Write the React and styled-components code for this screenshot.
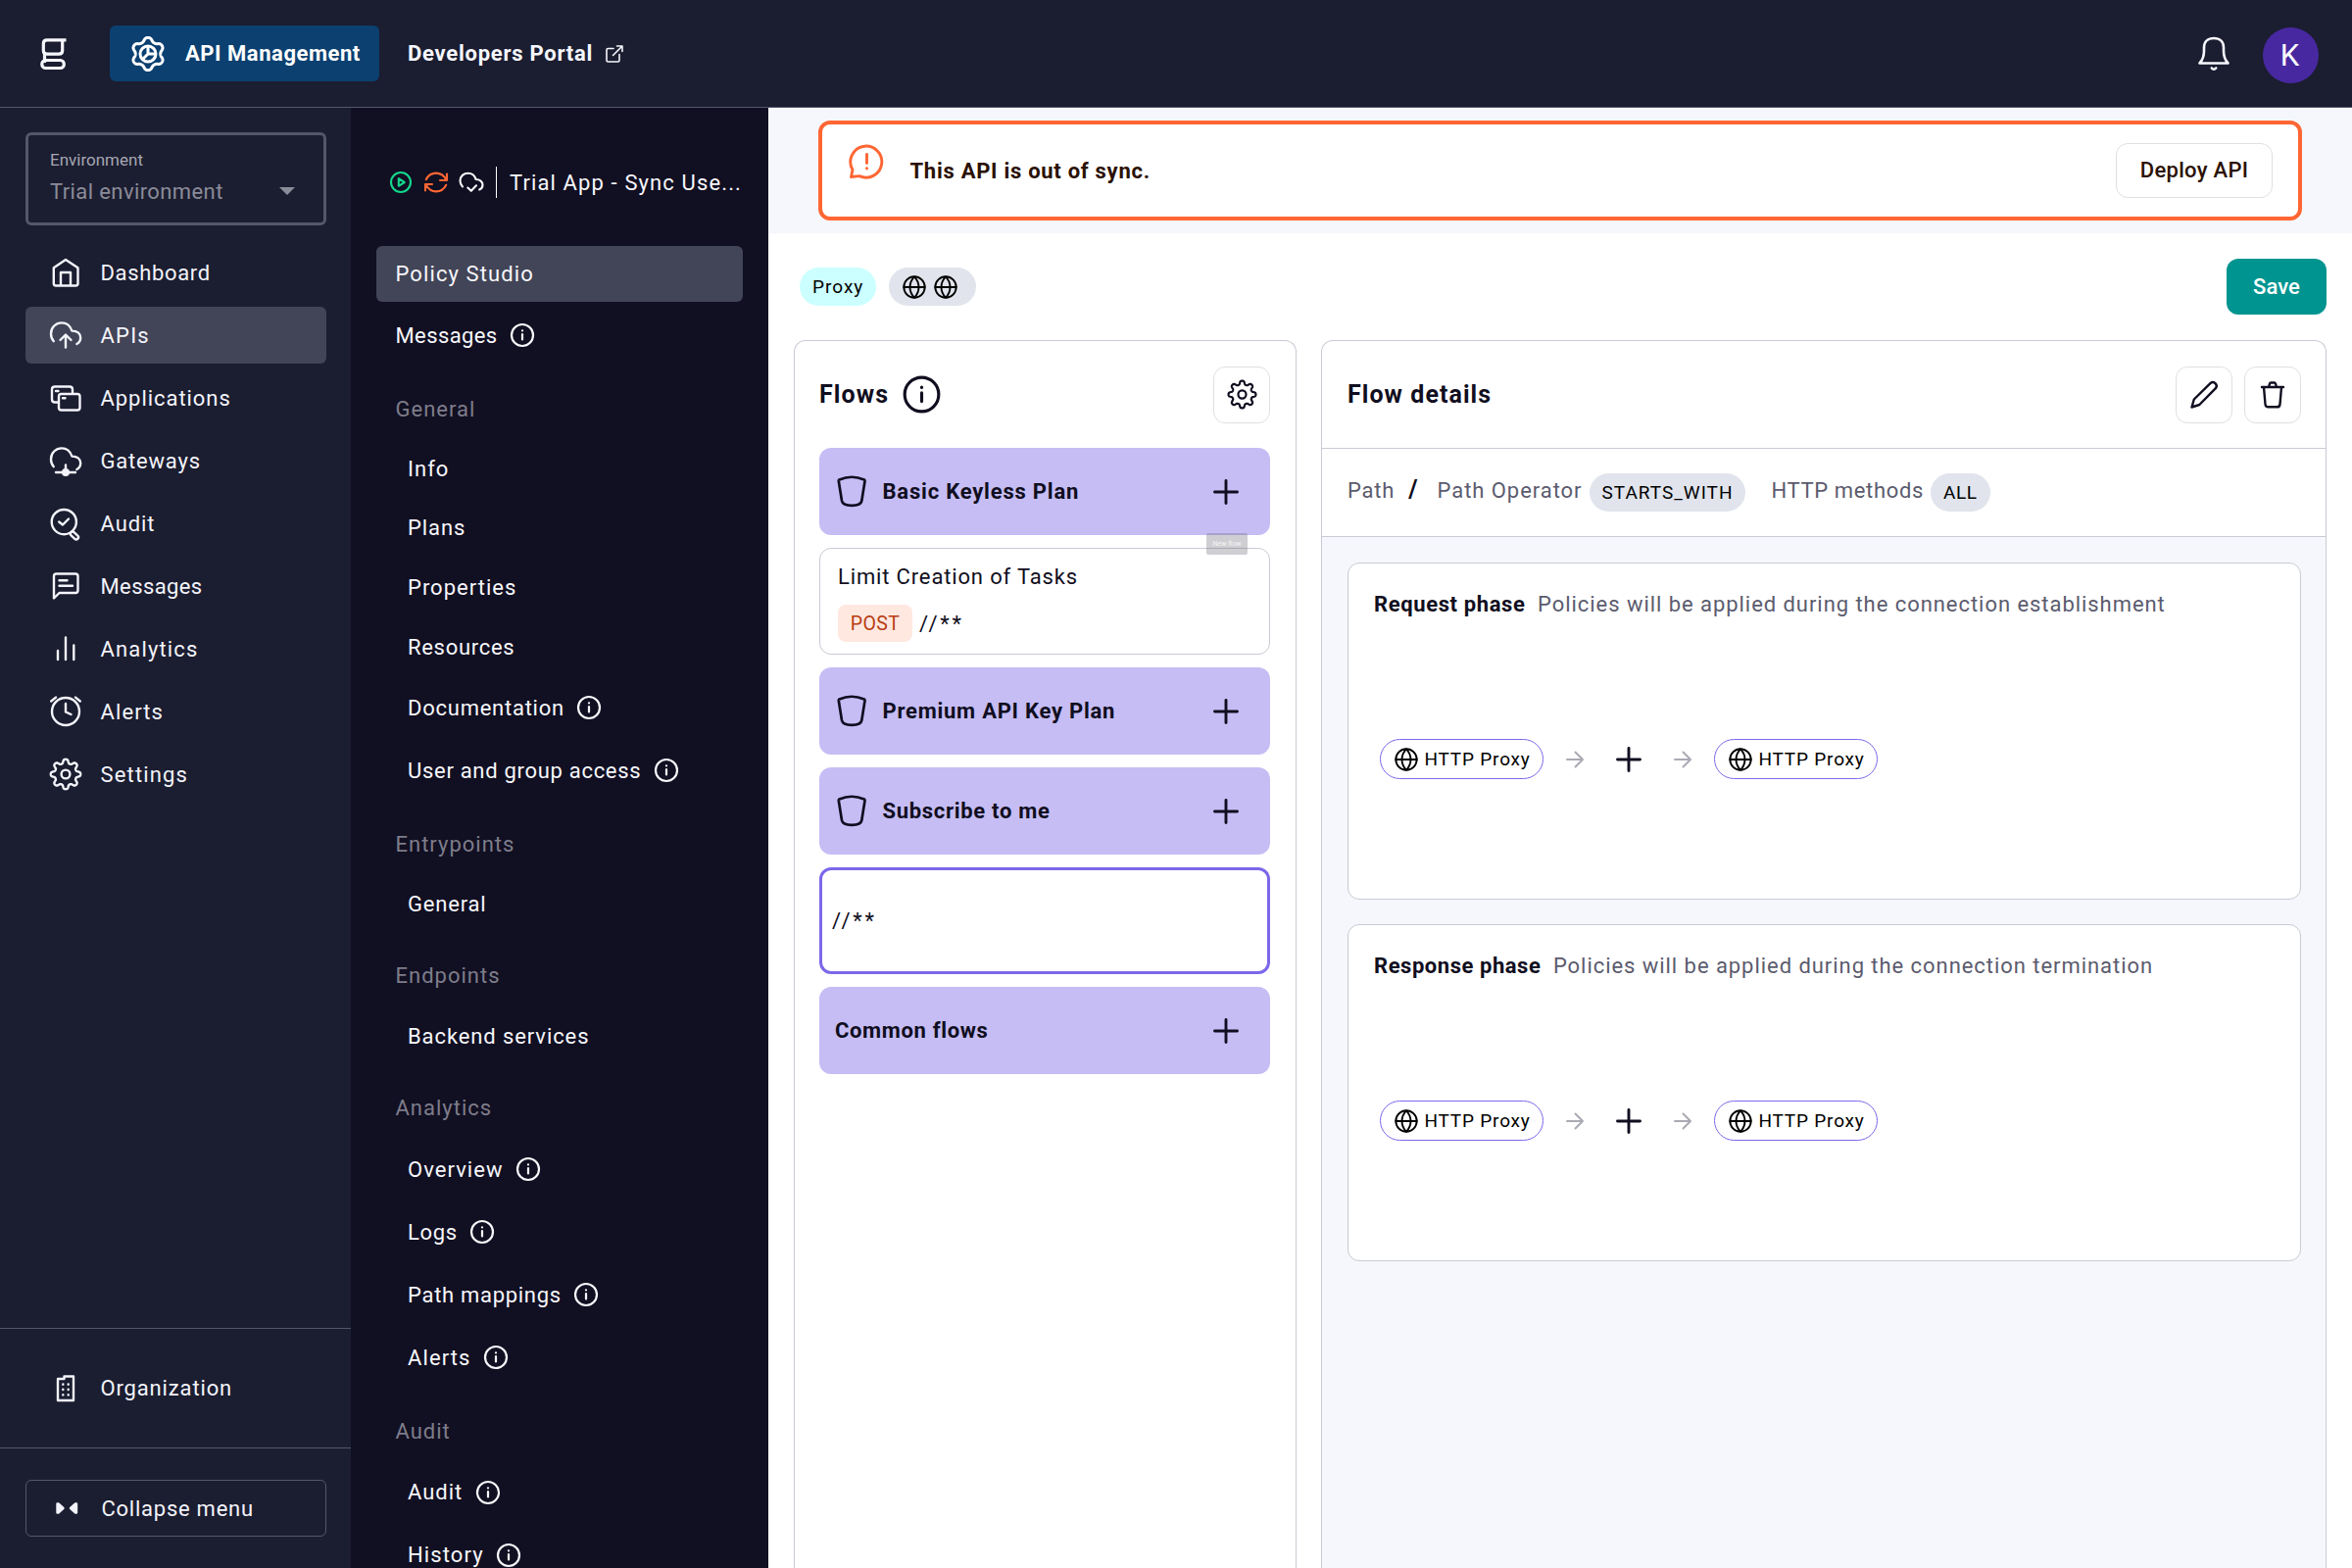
import React from "react";
import styled, { createGlobalStyle, css } from "styled-components";

const GlobalStyle = createGlobalStyle`
  * {
    box-sizing: border-box;
  }
  body {
    margin: 0;
    overflow: hidden;
    font-family: Roboto, "Liberation Sans", sans-serif;
    font-size: 22px;
    line-height: 26px;
    color: #100e20;
  }
  button {
    font-family: inherit;
    font-size: inherit;
    line-height: inherit;
    color: inherit;
    padding: 0;
    margin: 0;
    background: none;
    cursor: pointer;
  }
`;

const Text = styled.span`
  padding-top: 1px;
  letter-spacing: ${(p) => p.$ls || 0.8}px;
  white-space: nowrap;
`;
const Page = styled.div`
  width: 2400px;
  height: 1600px;
  display: flex;
  flex-direction: column;
  overflow: hidden;
  background: #fff;
`;
const Svg = styled.svg`
  display: block;
  flex: none;
  fill: none;
  stroke: currentColor;
  stroke-width: ${(p) => p.$w || 2.4};
  stroke-linecap: ${(p) => (p.$butt ? "butt" : "round")};
  stroke-linejoin: round;
`;

/* ---------- top bar ---------- */
const TopBar = styled.header`
  height: 110px;
  flex: none;
  display: flex;
  align-items: center;
  padding: 0 34px 0 40px;
  background: #1b1d30;
  border-bottom: 1px solid #56566a;
  color: #f6f7fd;
  font-weight: 700;
`;
const ApiButton = styled.button`
  width: 275px;
  height: 57px;
  margin-left: 44px;
  padding-left: 20px;
  display: flex;
  align-items: center;
  gap: 19px;
  border: none;
  border-radius: 6px;
  background: #0b4070;
  color: #fff;
  font-weight: 700;
`;
const PortalLink = styled.a`
  display: flex;
  align-items: center;
  gap: 12px;
  margin-left: 29px;
`;
const TopRight = styled.div`
  margin-left: auto;
  display: flex;
  align-items: center;
  gap: 33px;
`;
const Avatar = styled.div`
  width: 57px;
  height: 57px;
  margin-top: 3px;
  padding-right: 2px;
  border-radius: 50%;
  background: #4828a0;
  color: #fff;
  font-size: 31px;
  font-weight: 400;
  line-height: 58px;
  text-align: center;
`;

const Body = styled.div`
  flex: 1;
  display: flex;
  min-height: 0;
`;

/* ---------- main navigation ---------- */
const SideNav = styled.nav`
  width: 358px;
  flex: none;
  display: flex;
  flex-direction: column;
  background: #1b1d30;
  color: #f3f4fb;
`;
const EnvSelect = styled.div`
  height: 95px;
  margin: 25px 25px 19px 26px;
  padding: 13px 29px 0 22px;
  border: 3px solid #56566a;
  border-radius: 6px;
`;
const EnvLabel = styled.div`
  font-size: 17px;
  line-height: 24px;
  color: #a6a7b3;
`;
const EnvValue = styled.div`
  display: flex;
  align-items: center;
  justify-content: space-between;
  height: 40px;
  color: #8b8c99;
`;
const Caret = styled.span`
  border: 8px solid transparent;
  border-top-color: #8b8c99;
  border-bottom: none;
`;
const NavItem = styled.a`
  height: 58px;
  margin: 0 25px 6px 26px;
  padding-left: 23px;
  display: flex;
  align-items: center;
  gap: 17.5px;
  border-radius: 6px;
  ${(p) =>
    p.$active &&
    css`
      background: #424457;
    `}
`;
const NavFooter = styled.div`
  height: ${(p) => p.$h}px;
  margin-top: ${(p) => (p.$push ? "auto" : 0)};
  display: flex;
  flex-direction: column;
  justify-content: center;
  border-top: 1px solid #56566a;
`;
const OrgItem = styled(NavItem)`
  margin-bottom: 0;
`;
const CollapseButton = styled.button`
  height: 58px;
  margin: 0 25px 0 26px;
  padding-left: 22px;
  display: flex;
  align-items: center;
  gap: 18.5px;
  border: 1px solid #56566a;
  border-radius: 6px;
  color: #f3f4fb;
`;

/* ---------- api navigation ---------- */
const SubNav = styled.nav`
  width: 426px;
  flex: none;
  padding: 60px 26px 0;
  background: #110f22;
  color: #f7f7fb;
`;
const SubHeader = styled.div`
  height: 32px;
  margin-bottom: 49px;
  padding-left: 12px;
  display: flex;
  align-items: center;
  gap: 10px;
`;
const Divider = styled.span`
  width: 1px;
  height: 32px;
  margin: 0 3px 0 2px;
  background: #fff;
`;
const SubActive = styled.a`
  height: 57px;
  margin-bottom: 2px;
  padding-left: 19.5px;
  display: flex;
  align-items: center;
  border-radius: 6px;
  background: #424457;
`;
const SubItem = styled.a`
  height: ${(p) => (p.$info ? 64 : 60.67)}px;
  padding-left: ${(p) => (p.$top ? 19.5 : 32)}px;
  display: flex;
  align-items: center;
  gap: 12.5px;
`;
const SubLabel = styled.div`
  height: 73.8px;
  padding: 30.6px 0 0 19.5px;
  color: #7e7d8a;
`;

/* ---------- content ---------- */
const Content = styled.main`
  flex: 1;
  min-width: 0;
  display: flex;
  flex-direction: column;
`;
const BannerArea = styled.div`
  height: 128px;
  flex: none;
  padding: 13px 51px;
  background: #f6f7fc;
`;
const Banner = styled.div`
  height: 102px;
  padding: 0 26px;
  display: flex;
  align-items: center;
  border: 4px solid #ff6633;
  border-radius: 12px;
  background: #fff;
  color: #2b1104;
  font-weight: 700;
`;
const BannerIcon = styled.span`
  color: #ff6633;
  margin: 0 25.5px 18px 0;
`;
const DeployButton = styled.button`
  width: 160px;
  height: 56px;
  margin-left: auto;
  border: 1px solid #e0e0e3;
  border-radius: 12px;
  font-weight: 500;
`;
const Toolbar = styled.div`
  height: 109px;
  flex: none;
  padding: 0 26px 0 32px;
  display: flex;
  align-items: center;
  gap: 13px;
`;
const Chip = styled.span`
  height: 39px;
  padding: 0 13px;
  display: inline-flex;
  align-items: center;
  gap: 8px;
  border-radius: 20px;
  background: ${(p) => p.$bg || "#e1e4ec"};
  color: #000;
  font-size: 19px;
`;
const GlobeChip = styled(Chip)`
  padding: 0 19px 0 14px;
`;
const SaveButton = styled.button`
  width: 102px;
  height: 57px;
  margin-left: auto;
  border: none;
  border-radius: 12px;
  background: #009490;
  color: #fff;
  font-weight: 500;
`;
const Studio = styled.div`
  flex: 1;
  min-height: 0;
  padding: 0 26px;
  display: flex;
  gap: 25px;
`;
const Panel = styled.section`
  border: 1px solid #c9cad4;
  border-bottom: none;
  border-radius: 12px 12px 0 0;
`;
const FlowsPanel = styled(Panel)`
  width: 513px;
  flex: none;
  padding: 0 26px 0 25px;
`;
const DetailsPanel = styled(Panel)`
  flex: 1;
  display: flex;
  flex-direction: column;
  overflow: hidden;
`;
const PanelHead = styled.div`
  height: 109px;
  flex: none;
  display: flex;
  align-items: center;
  gap: 13px;
`;
const DetailsHead = styled(PanelHead)`
  padding: 0 25px 0 26px;
  border-bottom: 1px solid #c9cad4;
  height: 110px;
`;
const Title = styled.h2`
  margin: 0;
  font-size: 25px;
  font-weight: 700;
`;
const IconButton = styled.button`
  width: 58px;
  height: 58px;
  display: flex;
  align-items: center;
  justify-content: center;
  border: 1px solid #e0e0e3;
  border-radius: 12px;
`;
const HeadActions = styled.div`
  display: flex;
  gap: 12px;
  margin-left: auto;
`;
const PlanHeader = styled.div`
  position: relative;
  height: 89px;
  margin-bottom: 13px;
  padding: 0 31px 0 ${(p) => (p.$plain ? 16 : 17)}px;
  display: flex;
  align-items: center;
  gap: 15.5px;
  border-radius: 12px;
  background: #c6bdf5;
  font-weight: 700;
`;
const AddButton = styled.button`
  margin-left: auto;
  border: none;
`;
const Tooltip = styled.span`
  position: absolute;
  z-index: 1;
  right: 23px;
  top: 87px;
  width: 42px;
  height: 22px;
  border-radius: 2px;
  background: rgba(97, 97, 110, 0.3);
  color: rgba(255, 255, 255, 0.8);
  font-size: 7px;
  font-weight: 400;
  line-height: 23px;
  text-align: center;
`;
const FlowCard = styled.div`
  height: 109px;
  margin-bottom: 13px;
  padding: 15px 18px;
  display: flex;
  flex-direction: column;
  gap: 15px;
  border: 1px solid #c9cad4;
  border-radius: 12px;
`;
const SelectedCard = styled(FlowCard)`
  padding: 0 10px;
  justify-content: center;
  border: 3px solid #7b68ea;
`;
const FlowPath = styled.div`
  display: flex;
  align-items: center;
  gap: 7px;
`;
const Method = styled.span`
  width: 76px;
  height: 38px;
  border-radius: 8px;
  background: #ffe8e0;
  color: #b83d12;
  font-size: 19.5px;
  line-height: 39px;
  text-align: center;
`;
const InfoBar = styled.div`
  height: 90px;
  flex: none;
  padding: 0 26px;
  display: flex;
  align-items: center;
  border-bottom: 1px solid #c9cad4;
  color: #5b5b6e;
`;
const Lifted = styled.span`
  display: flex;
  margin-bottom: 5px;
`;
const Slash = styled.b`
  margin: 0 20px 0 14px;
  color: #100e20;
  font-size: 25px;
`;
const InfoChip = styled(Chip)`
  margin: 0 26px 0 7px;
`;
const Phases = styled.div`
  flex: 1;
  padding: 26px 25px 0 26px;
  background: #f6f7fc;
`;
const Phase = styled.div`
  height: 344px;
  margin-bottom: 25px;
  padding: 28px 26px;
  border: 1px solid #c9cad4;
  border-radius: 12px;
  background: #fff;
`;
const PhaseTitle = styled.div`
  height: 26px;
  display: flex;
  gap: 12.5px;
  color: #5b5b6e;
  b {
    padding-top: 1px;
    color: #100e20;
  }
`;
const Steps = styled.div`
  display: flex;
  align-items: center;
  margin: 125px 0 0 6px;
`;
const Endpoint = styled.span`
  width: 167px;
  height: 41px;
  padding-left: 14px;
  display: flex;
  align-items: center;
  gap: 6.5px;
  border: 1px solid #7b68ea;
  border-radius: 21px;
  color: #000;
  font-size: 19px;
`;
const Arrow = styled.span`
  color: #aaaab4;
  margin: 0 22px;
`;
const StepPlus = styled.span`
  margin: 0 9px;
`;

/* ---------- icons ---------- */
// closed outline of a cog: n lobes swinging between radii a and b, k squares the teeth off
function cog(c, n, a, b, k) {
  const pts = [];
  for (let i = 0; i < 240; i++) {
    const t = (i / 240) * Math.PI * 2;
    const r = (a + b) / 2 + (((b - a) / 2) * Math.tanh(k * Math.cos(n * t))) / Math.tanh(k);
    pts.push((c + r * Math.sin(t)).toFixed(2) + " " + (c - r * Math.cos(t)).toFixed(2));
  }
  return "M" + pts.join("L") + "Z";
}

const Cog = ({ size = 36 }) => (
  <Svg width={size} height={size} viewBox="0 0 36 36">
    <path d={cog(18, 8, 11.2, 15.2, 1.6)} />
    <circle cx="18" cy="18" r="4.4" />
  </Svg>
);
const ApiIcon = () => (
  <Svg width="38" height="38" viewBox="0 0 38 38" $w="3">
    <path d={cog(19, 6, 12.8, 16.6, 1.1)} />
    <circle cx="19" cy="19" r="8" />
    <path d="M19 11.5V19H26.5M19 19L14 24" />
  </Svg>
);
const Logo = () => (
  <Svg width="28" height="34" viewBox="0 0 28 34" $w="3.2" $butt>
    <path d="M27.500 2.800H8Q4.300 2.800 4.300 6.500V13.500Q4.300 17.200 8 17.200H20Q23.700 17.200 23.700 13.500V3" />
    <path d="M5.500 15V26" />
    <rect x="2.800" y="23.500" width="22.500" height="8" rx="3.800" />
  </Svg>
);
const External = () => (
  <Svg width="20" height="20" viewBox="0 0 20 20" $w="1.6">
    <path d="M9 4.500H3.500Q2 4.500 2 6V16.500Q2 18 3.500 18H13.500Q15 18 15 16.500V10.500M8.500 11.500L18 2M12.500 2H18V7.500" />
  </Svg>
);
const Bell = () => (
  <Svg width="34" height="38" viewBox="0 0 34 38" $w="2.6">
    <path d="M2.500 28.500C5.800 25 7 21 7 16V12.500C7 6.500 11.200 3 17 3S27 6.500 27 12.500V16C27 21 28.200 25 31.500 28.500Z" />
    <path d="M14.800 33.500Q17 36 19.200 33.500" />
  </Svg>
);
const Info = ({ size = 26, w = 2.2 }) => (
  <Svg width={size} height={size} viewBox="0 0 26 26" $w={w}>
    <circle cx="13" cy="13" r="11" />
    <path d="M13 12V17.500M13 8.300V8.500" />
  </Svg>
);
const CLOUD =
  "M5.800 24.200C3.800 22 3 19.400 3 16.400C3 10 8 5.400 14 5.400C19 5.400 22.600 8.400 24.400 13.600C29.600 13.400 33.200 16.200 33.200 20.600C33.200 23.600 31.800 25.800 29.300 27";
const navIcons = {
  home: (
    <path d="M5.800 13.200L18 5L30.500 13.200V29.300Q30.500 31.500 28.300 31.500H8Q5.800 31.500 5.800 29.300ZM13 31V18H23V31" />
  ),
  cloudUp: <path d={CLOUD + "M18 30.600V18M12.500 23L18 17.500L23.500 23"} />,
  apps: (
    <>
      <rect x="11" y="14" width="21.500" height="16.500" rx="2.500" />
      <path d="M10.500 22.500H7Q4 22.500 4 19.500V9.500Q4 6.500 7 6.500H22Q25 6.500 25 9.500V13.500M8 11H10.500M15 18.300H17.500" />
    </>
  ),
  gateway: (
    <>
      <path d={CLOUD + "M18 22.500V29M8 30H28"} />
      <circle cx="18" cy="30" r="2.8" fill="currentColor" />
    </>
  ),
  audit: (
    <>
      <circle cx="16.300" cy="16.600" r="12.600" />
      <path d="M11.200 16.500L15 19.500L21 13.500" />
      <rect x="24" y="26" width="9.500" height="4.400" rx="2.200" transform="rotate(43 25 27)" />
    </>
  ),
  messages: <path d="M6 30.500V8Q6 5.500 8.500 5.500H28Q30.500 5.500 30.500 8V22.500Q30.500 25 28 25H11.500ZM11.500 12.300H19.500M11.500 17.800H25" />,
  analytics: <path d="M10 20V29M18 6.500V29M26.300 14.500V29" />,
  alerts: (
    <>
      <circle cx="18" cy="18" r="14" />
      <path d="M18 10V18.500L23.500 21M3.200 7.500L8 3.600M32.800 7.500L28 3.600" />
    </>
  ),
  organization: (
    <path d="M10 8H16.500V5.500H26V30H10ZM15.300 13.500V13.700M20.700 13.500V13.700M15.300 18.800V19M20.700 18.800V19M15.300 24.200V24.400M20.700 24.200V24.400" />
  ),
};
const NavIcon = ({ name }) =>
  name === "settings" ? (
    <Cog />
  ) : (
    <Svg width="36" height="36" viewBox="0 0 36 36">
      {navIcons[name]}
    </Svg>
  );
const CollapseIcon = () => (
  <Svg width="36" height="20" viewBox="0 0 36 20" $w="2.4">
    <path fill="currentColor" d="M9.500 5.500V14.500L10.500 14.500L15.500 10L10.500 5.500ZM29 5.500V14.500L28 14.500L23 10L28 5.500Z" />
  </Svg>
);
const PlayIcon = () => (
  <Svg width="26" height="26" viewBox="0 0 26 26" $w="2.1" color="#14d78c">
    <circle cx="13" cy="13" r="10" />
    <path d="M10.800 9.200V16.800L16.700 13Z" />
  </Svg>
);
const SyncIcon = () => (
  <Svg width="26" height="26" viewBox="0 0 26 26" $w="2.1" color="#ff6633">
    <path d="M2.800 10.200Q6 3.600 13 3.600Q19.500 3.600 23.500 10.500M24 4.500V11H17M23.200 15.800Q20 22.400 13 22.400Q6.500 22.400 2.500 15.500M2 21.500V15H9" />
  </Svg>
);
const CloudCheck = () => (
  <Svg width="26" height="26" viewBox="0 0 26 26" $w="2.1">
    <path d="M4 17.500C2 15.500 1.500 13.500 1.500 11.500C1.500 6.800 5.200 3.800 9.500 3.800C13.500 3.800 16.500 6.500 17.500 10C21.500 10 24.500 12.500 24.500 15.500C24.500 18 23.200 19.700 21.200 20.500M9.300 18.500L12.800 21.800L18 16.300" />
  </Svg>
);
const SyncAlert = () => (
  <Svg width="38" height="38" viewBox="0 0 38 38" $w="2.9">
    <path d="M3.500 34.500L5 27.200A16 16 0 1 1 12 33.600Z" />
    <path d="M19.500 11.500V20.500M19.500 25.800V26" />
  </Svg>
);
const Globe = () => (
  <Svg width="24" height="24" viewBox="0 0 24 24" $w="1.9">
    <circle cx="12" cy="12" r="10.700" />
    <path d="M1.300 12H22.700M12 1.300C6 7.500 6 16.500 12 22.700C18 16.500 18 7.500 12 1.300Z" />
  </Svg>
);
const Bucket = () => (
  <Svg width="32" height="36" viewBox="0 0 32 36" $w="2.7">
    <path d="M3.500 5.500Q16 0 28.800 5.500Q29.600 6 29.500 7L26.300 27Q25.500 31.800 16.200 31.800Q7 31.800 6 27L2.800 7Q2.700 6 3.500 5.500Z" />
  </Svg>
);
const Plus = () => (
  <Svg width="28" height="28" viewBox="0 0 28 28" $w="2.900">
    <path d="M14 2.500V25.500M2.500 14H25.500" />
  </Svg>
);
const Pencil = () => (
  <Svg width="32" height="32" viewBox="0 0 32 32">
    <path d="M3.500 28.500L5.800 20.500L22.700 3.900Q25 1.900 27.500 4.100Q30 6.700 27.900 9.200L11.300 26Z" />
  </Svg>
);
const Trash = () => (
  <Svg width="30" height="32" viewBox="0 0 30 32">
    <path d="M4 8H26M11 8L12 4.500Q12.300 3.500 13.300 3.500H16.700Q17.700 3.500 18 4.500L19 8M6 8L7.500 25.500Q7.800 28.300 10.500 28.300H19.500Q22.200 28.300 22.500 25.500L24 8" />
  </Svg>
);
const ArrowRight = () => (
  <Svg width="20" height="20" viewBox="0 0 20 20" $w="2">
    <path d="M2 10H18M10.500 2.500L18 10L10.500 17.500" />
  </Svg>
);

const navItems = [
  { label: "Dashboard", icon: "home", ls: 0.65 },
  { label: "APIs", icon: "cloudUp", ls: 1.2, active: true },
  { label: "Applications", icon: "apps", ls: 0.95 },
  { label: "Gateways", icon: "gateway", ls: 0.8 },
  { label: "Audit", icon: "audit", ls: 0.9 },
  { label: "Messages", icon: "messages", ls: 0.4 },
  { label: "Analytics", icon: "analytics", ls: 1.15 },
  { label: "Alerts", icon: "alerts", ls: 1.1 },
  { label: "Settings", icon: "settings", ls: 1.15 },
];

const subGroups = [
  {
    name: "General",
    items: [
      { label: "Info", ls: 1 },
      { label: "Plans", ls: 0.9 },
      { label: "Properties", ls: 1 },
      { label: "Resources", ls: 0.7 },
      { label: "Documentation", ls: 0.75, info: true },
      { label: "User and group access", ls: 0.7, info: true },
    ],
  },
  { name: "Entrypoints", items: [{ label: "General", ls: 0.8 }] },
  { name: "Endpoints", items: [{ label: "Backend services", ls: 0.9 }] },
  {
    name: "Analytics",
    items: [
      { label: "Overview", ls: 1.05, info: true },
      { label: "Logs", ls: 0.7, info: true },
      { label: "Path mappings", ls: 0.7, info: true },
      { label: "Alerts", ls: 1.1, info: true },
    ],
  },
  {
    name: "Audit",
    items: [
      { label: "Audit", ls: 1, info: true },
      { label: "History", ls: 1.1, info: true },
    ],
  },
];

const phases = [
  { name: "Request phase", ls: 0.62, text: "Policies will be applied during the connection establishment" },
  { name: "Response phase", ls: 0.55, text: "Policies will be applied during the connection termination" },
];

const Plan = ({ label, ls, plain, tooltip }) => (
  <PlanHeader $plain={plain}>
    {!plain && <Bucket />}
    <Text $ls={ls}>{label}</Text>
    <AddButton>
      <Plus />
    </AddButton>
    {tooltip && <Tooltip>{tooltip}</Tooltip>}
  </PlanHeader>
);

const Proxy = () => (
  <Endpoint>
    <Globe />
    <Text $ls={0.8}>HTTP Proxy</Text>
  </Endpoint>
);

function App() {
  return (
    <Page>
      <GlobalStyle />
      <TopBar>
        <Logo />
        <ApiButton>
          <ApiIcon />
          <Text $ls={0.55}>API Management</Text>
        </ApiButton>
        <PortalLink>
          <Text $ls={0.75}>Developers Portal</Text>
          <External />
        </PortalLink>
        <TopRight>
          <Bell />
          <Avatar>K</Avatar>
        </TopRight>
      </TopBar>
      <Body>
        <SideNav>
          <EnvSelect>
            <EnvLabel>Environment</EnvLabel>
            <EnvValue>
              <Text $ls={0.4}>Trial environment</Text>
              <Caret />
            </EnvValue>
          </EnvSelect>
          {navItems.map((item) => (
            <NavItem key={item.label} $active={item.active}>
              <NavIcon name={item.icon} />
              <Text $ls={item.ls}>{item.label}</Text>
            </NavItem>
          ))}
          <NavFooter $h={122} $push>
            <OrgItem>
              <NavIcon name="organization" />
              <Text $ls={0.85}>Organization</Text>
            </OrgItem>
          </NavFooter>
          <NavFooter $h={123}>
            <CollapseButton>
              <CollapseIcon />
              <Text $ls={0.75}>Collapse menu</Text>
            </CollapseButton>
          </NavFooter>
        </SideNav>

        <SubNav>
          <SubHeader>
            <PlayIcon />
            <SyncIcon />
            <CloudCheck />
            <Divider />
            <Text $ls={1.12}>Trial App - Sync Use...</Text>
          </SubHeader>
          <SubActive>
            <Text $ls={1.1}>Policy Studio</Text>
          </SubActive>
          <SubItem $info $top>
            <Text $ls={0.4}>Messages</Text>
            <Info />
          </SubItem>
          {subGroups.map((group) => (
            <React.Fragment key={group.name}>
              <SubLabel>
                <Text $ls={1}>{group.name}</Text>
              </SubLabel>
              {group.items.map((item) => (
                <SubItem key={item.label} $info={item.info}>
                  <Text $ls={item.ls}>{item.label}</Text>
                  {item.info && <Info />}
                </SubItem>
              ))}
            </React.Fragment>
          ))}
        </SubNav>

        <Content>
          <BannerArea>
            <Banner>
              <BannerIcon>
                <SyncAlert />
              </BannerIcon>
              <Text $ls={0.72}>This API is out of sync.</Text>
              <DeployButton>
                <Text $ls={0.3}>Deploy API</Text>
              </DeployButton>
            </Banner>
          </BannerArea>
          <Toolbar>
            <Chip $bg="#ccffff">
              <Text $ls={1}>Proxy</Text>
            </Chip>
            <GlobeChip>
              <Globe />
              <Globe />
            </GlobeChip>
            <SaveButton>
              <Text $ls={0.1}>Save</Text>
            </SaveButton>
          </Toolbar>
          <Studio>
            <FlowsPanel>
              <PanelHead>
                <Title>
                  <Text $ls={1.1}>Flows</Text>
                </Title>
                <Info size={41} w={2} />
                <HeadActions>
                  <IconButton>
                    <Cog size={33} />
                  </IconButton>
                </HeadActions>
              </PanelHead>
              <Plan label="Basic Keyless Plan" ls={0.8} tooltip="New flow" />
              <FlowCard>
                <Text $ls={0.85}>Limit Creation of Tasks</Text>
                <FlowPath>
                  <Method>
                    <Text $ls={0.4}>POST</Text>
                  </Method>
                  <Text $ls={2.8}>//**</Text>
                </FlowPath>
              </FlowCard>
              <Plan label="Premium API Key Plan" ls={0.75} />
              <Plan label="Subscribe to me" ls={0.7} />
              <SelectedCard>
                <Text $ls={2.8}>//**</Text>
              </SelectedCard>
              <Plan label="Common flows" ls={0.65} plain />
            </FlowsPanel>
            <DetailsPanel>
              <DetailsHead>
                <Title>
                  <Text $ls={1.05}>Flow details</Text>
                </Title>
                <HeadActions>
                  <IconButton>
                    <Pencil />
                  </IconButton>
                  <IconButton>
                    <Trash />
                  </IconButton>
                </HeadActions>
              </DetailsHead>
              <InfoBar>
                <Lifted>
                  <Text $ls={0.8}>Path</Text>
                  <Slash>/</Slash>
                  <Text $ls={0.95}>Path Operator</Text>
                </Lifted>
                <InfoChip>
                  <Text $ls={1}>STARTS_WITH</Text>
                </InfoChip>
                <Lifted>
                  <Text $ls={0.65}>HTTP methods</Text>
                </Lifted>
                <InfoChip>
                  <Text $ls={0.6}>ALL</Text>
                </InfoChip>
              </InfoBar>
              <Phases>
                {phases.map((phase) => (
                  <Phase key={phase.name}>
                    <PhaseTitle>
                      <b>
                        <Text $ls={phase.ls}>{phase.name}</Text>
                      </b>
                      <Text $ls={0.95}>{phase.text}</Text>
                    </PhaseTitle>
                    <Steps>
                      <Proxy />
                      <Arrow>
                        <ArrowRight />
                      </Arrow>
                      <StepPlus>
                        <Plus />
                      </StepPlus>
                      <Arrow>
                        <ArrowRight />
                      </Arrow>
                      <Proxy />
                    </Steps>
                  </Phase>
                ))}
              </Phases>
            </DetailsPanel>
          </Studio>
        </Content>
      </Body>
    </Page>
  );
}

export default App;
